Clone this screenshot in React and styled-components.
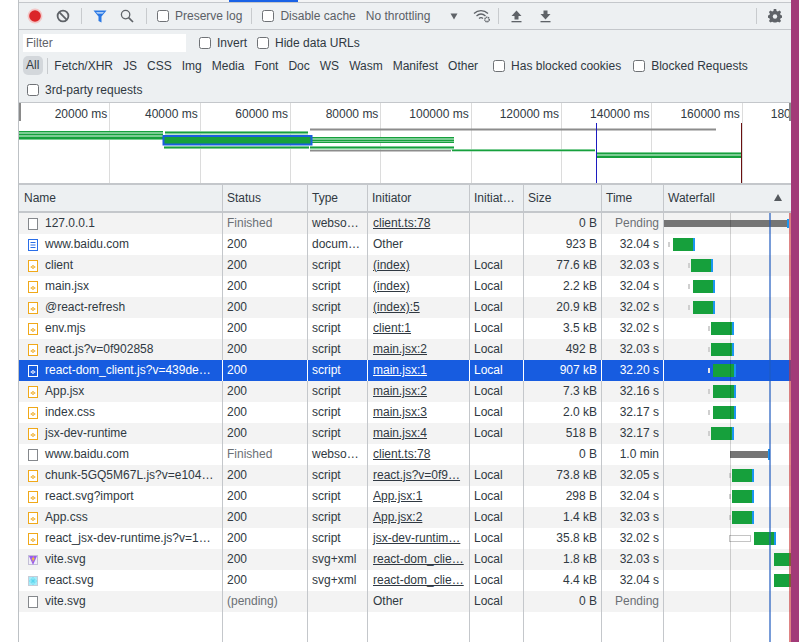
import React from "react";
import styled, { createGlobalStyle } from "styled-components";

const GlobalStyle = createGlobalStyle`
  html, body { margin: 0; padding: 0; background: #fff; }
  body { font-family: "Liberation Sans", Arial, sans-serif; font-size: 12px; color: #303942; }
`;

const Page = styled.div`
  display: flex;
  height: 642px;
  width: 799px;
  overflow: hidden;
`;

const Panel = styled.div`
  margin-left: 18px;
  width: 772px;
  flex: none;
  border-left: 1px solid #bdc1c5;
  display: flex;
  flex-direction: column;
  background: #fff;
`;

const Strip = styled.div`
  flex: 1;
  background: #a23a78;
`;

const TabEdge = styled.div`
  height: 2px;
  border-bottom: 1px solid #c4c7cb;
  background: #f3f4f5;
  padding-left: 210px;
`;

const TabMark = styled.div`
  width: 69px;
  height: 2px;
  background: #1a62e6;
`;

const Toolbar = styled.div`
  height: 26px;
  display: flex;
  align-items: center;
  background: #edf0f2;
  border-bottom: 1px solid #c4c7cb;
  color: #5b6066;
`;

const ToolIcon = styled.svg`
  flex: none;
  display: block;
  margin-left: ${(p) => p.$left}px;
`;

const Sep = styled.div`
  flex: none;
  width: 1px;
  height: 16px;
  background: #c8cbce;
  margin-left: ${(p) => p.$left}px;
`;

const Check = styled.input.attrs({ type: "checkbox" })`
  appearance: none;
  flex: none;
  box-sizing: border-box;
  width: 12px;
  height: 12px;
  margin: 0 6px 0 ${(p) => p.$left || 0}px;
  background: #fff;
  border: 1px solid #6f7276;
  border-radius: 2.5px;
`;

const ToolText = styled.span`
  flex: none;
  margin-left: ${(p) => p.$left || 0}px;
`;

const FilterBar = styled.div`
  background: #edf0f2;
  border-bottom: 1px solid #c4c7cb;
  padding: 3px 0 0 4px;
  height: 69px;
`;

const FilterRow = styled.div`
  display: flex;
  align-items: center;
  height: ${(p) => p.$h}px;
`;

const FilterInput = styled.div`
  width: 160px;
  height: 18px;
  line-height: 19px;
  padding-left: 3px;
  background: #fff;
  color: #5f6368;
  flex: none;
`;

const TypeAll = styled.span`
  flex: none;
  height: 19px;
  line-height: 19px;
  padding: 0 4px 0 3px;
  border-radius: 5px;
  background: #d3d7db;
`;

const TypeSep = styled.div`
  flex: none;
  width: 1px;
  height: 16px;
  background: #c8cbce;
  margin: 0 6px 0 4px;
`;

const TypeName = styled.span`
  flex: none;
  margin-right: 10px;
`;

const Overview = styled.div`
  position: relative;
  height: 80px;
  overflow: hidden;
  border-bottom: 2px solid #c4c7cb;
`;

const Ticks = styled.div`
  display: flex;
  height: 100%;
  margin-left: 1px;
`;

const Tick = styled.div`
  flex: none;
  box-sizing: border-box;
  width: 90.35px;
  padding: 4px 2px 0 0;
  text-align: right;
  white-space: nowrap;
  border-right: 1px solid #dcdcdc;
`;

const LastTick = styled.div`
  flex: none;
  padding: 4px 0 0 28px;
  white-space: nowrap;
`;

const Handle = styled.div`
  position: absolute;
  top: 0;
  ${(p) => (p.$right ? "right: 0;" : "left: 0;")}
  width: 2px;
  height: 18px;
  background: #8a8a8a;
`;

const OverviewChart = styled.svg`
  position: absolute;
  left: 0;
  top: 0;
`;

const Table = styled.div`
  flex: 1;
  display: flex;
  flex-direction: column;
  position: relative;
  min-height: 0;
`;

const columns = "203px 85px 60px 102px 54px 78px 62px 128px";

const HeadRow = styled.div`
  display: grid;
  grid-template-columns: ${columns};
  height: 26px;
  background: #edf0f2;
  border-bottom: 2px solid #c4c7cb;
`;

const HeadCell = styled.div`
  box-sizing: border-box;
  display: flex;
  align-items: center;
  justify-content: ${(p) => (p.$between ? "space-between" : "flex-start")};
  padding: 0 ${(p) => (p.$between ? 9 : 4)}px 1px ${(p) => (p.$first ? 5 : 4)}px;
  border-left: ${(p) => (p.$first ? "none" : "1px solid #c4c7cb")};
`;

const SortArrow = styled.span`
  width: 0;
  height: 0;
  border-left: 4px solid transparent;
  border-right: 4px solid transparent;
  border-bottom: 7px solid #55595e;
`;

const Row = styled.div`
  display: grid;
  grid-template-columns: ${columns};
  height: 21px;
  background: ${(p) => (p.$selected ? "#175ce0" : p.$odd ? "#f3f3f3" : "#fff")};
  color: ${(p) => (p.$selected ? "#fff" : "#303942")};
`;

const Cell = styled.div`
  box-sizing: border-box;
  line-height: 21px;
  padding: 0 4px 0 ${(p) => p.$pad || 4}px;
  white-space: nowrap;
  overflow: hidden;
  border-left: 1px solid ${(p) => (p.$selected ? "#fff" : "#c4c7cb")};
  text-align: ${(p) => (p.$right ? "right" : "left")};
  color: ${(p) => (p.$muted ? "#6b7075" : "inherit")};
  text-decoration: ${(p) => (p.$link ? "underline" : "none")};
`;

const NameCell = styled.div`
  display: flex;
  align-items: center;
  line-height: 21px;
  padding-left: 9px;
  gap: 7px;
  white-space: nowrap;
  overflow: hidden;
`;

const WaterCell = styled.div`
  position: relative;
  overflow: hidden;
  border-left: 1px solid ${(p) => (p.$selected ? "#fff" : "#c4c7cb")};
`;

const Bar = styled.div`
  position: absolute;
  box-sizing: border-box;
  left: ${(p) => p.$x - 664}px;
  width: ${(p) => p.$w}px;
  top: ${(p) => p.$top}px;
  height: ${(p) => p.$h}px;
  background: ${(p) => p.$color};
  border: ${(p) => p.$border || "none"};
`;

const Filler = styled.div`
  flex: 1;
  display: grid;
  grid-template-columns: ${columns};
`;

const FillCol = styled.div`
  border-left: ${(p) => (p.$first ? "none" : "1px solid #c4c7cb")};
`;

const MarkLine = styled.div`
  position: absolute;
  top: 28px;
  bottom: 0;
  left: ${(p) => p.$x - 19}px;
  width: ${(p) => p.$w}px;
  background: ${(p) => p.$color};
`;

const GREEN = "#16a03c";
const BLUE = "#1a96f0";

function FileIcon({ kind, selected }) {
  const orange = selected ? "#fff" : "#f0a818";
  if (kind === "vite") {
    return (
      <svg width="10" height="12" viewBox="0 0 10 12">
        <rect x="0.5" y="1.5" width="9" height="9" fill="#f0eef8" stroke="#c3bfd6" />
        <path d="M1 2 L9 2 L5 11 Z" fill="#9a5cf0" />
        <path d="M6 1.5 L3.4 5.6 L4.9 5.6 L4.4 8.6 L6.8 4.2 L5.3 4.2 Z" fill="#f9c928" />
      </svg>
    );
  }
  if (kind === "react") {
    return (
      <svg width="10" height="12" viewBox="0 0 10 12">
        <rect x="0.5" y="1.5" width="9" height="9" fill="#a5ecfa" stroke="#c6cdd8" />
        <circle cx="5" cy="6" r="1" fill="#45cfea" />
        <ellipse cx="5" cy="6" rx="3.6" ry="1.5" fill="none" stroke="#5fd8ef" strokeWidth="0.6" />
        <ellipse cx="5" cy="6" rx="1.5" ry="3.6" fill="none" stroke="#5fd8ef" strokeWidth="0.6" />
      </svg>
    );
  }
  if (kind === "doc") {
    return (
      <svg width="10" height="12" viewBox="0 0 10 12">
        <rect x="0.5" y="0.5" width="9" height="11" fill="#fff" stroke="#2a6ee8" />
        <path d="M2.5 3.5H7.5M2.5 6H7.5M2.5 8.5H7.5" stroke="#2a6ee8" />
      </svg>
    );
  }
  if (kind === "script") {
    return (
      <svg width="10" height="12" viewBox="0 0 10 12">
        <rect x="0.5" y="0.5" width="9" height="11" fill={selected ? "#175ce0" : "#fff"} stroke={orange} />
        <circle cx="5" cy="7" r="1.3" fill="none" stroke={orange} />
        <path d="M2.5 7H3.7M6.3 7H7.5" stroke={orange} strokeWidth="0.8" />
      </svg>
    );
  }
  return (
    <svg width="10" height="12" viewBox="0 0 10 12">
      <rect x="0.5" y="0.5" width="9" height="11" fill="#fff" stroke="#85888c" />
    </svg>
  );
}

const wait = (x, top = 8) => ({ x, w: 2, top, h: 5, color: "#cfcfcf" });
const green = (x, w = 20) => ({ x, w, top: 4, h: 13, color: GREEN });
const recv = (x) => ({ x, w: 2, top: 4, h: 13, color: BLUE });

const mid = (wx, x) => [wait(wx), green(x, 21), recv(x + 21)];
const late = [wait(729), green(732), recv(752)];

const rows = [
  { n: "127.0.0.1", k: "blank", st: "Finished", m: 1, ty: "webso…", ini: "client.ts:78", l: 1, by: "", size: "0 B", time: "Pending", tm: 1,
    bars: [{ x: 664, w: 123, top: 7, h: 7, color: "#757575" }, { x: 787, w: 2, top: 6, h: 9, color: BLUE }] },
  { n: "www.baidu.com", k: "doc", st: "200", ty: "docum…", ini: "Other", by: "", size: "923 B", time: "32.04 s", bars: [wait(668), green(673), recv(693)] },
  { n: "client", k: "script", st: "200", ty: "script", ini: "(index)", l: 1, by: "Local", size: "77.6 kB", time: "32.03 s", bars: [wait(688), green(691), recv(711)] },
  { n: "main.jsx", k: "script", st: "200", ty: "script", ini: "(index)", l: 1, by: "Local", size: "2.2 kB", time: "32.04 s", bars: [wait(688), green(693), recv(713)] },
  { n: "@react-refresh", k: "script", st: "200", ty: "script", ini: "(index):5", l: 1, by: "Local", size: "20.9 kB", time: "32.02 s", bars: [wait(688), green(693), recv(713)] },
  { n: "env.mjs", k: "script", st: "200", ty: "script", ini: "client:1", l: 1, by: "Local", size: "3.5 kB", time: "32.02 s", bars: mid(708, 711) },
  { n: "react.js?v=0f902858", k: "script", st: "200", ty: "script", ini: "main.jsx:2", l: 1, by: "Local", size: "492 B", time: "32.03 s", bars: mid(708, 711) },
  { n: "react-dom_client.js?v=439de…", k: "script", st: "200", ty: "script", ini: "main.jsx:1", l: 1, by: "Local", size: "907 kB", time: "32.20 s", sel: 1, bars: [{ ...wait(708), color: "#e6e6e6" }, green(713, 21), recv(734)] },
  { n: "App.jsx", k: "script", st: "200", ty: "script", ini: "main.jsx:2", l: 1, by: "Local", size: "7.3 kB", time: "32.16 s", bars: mid(708, 713) },
  { n: "index.css", k: "script", st: "200", ty: "script", ini: "main.jsx:3", l: 1, by: "Local", size: "2.0 kB", time: "32.17 s", bars: mid(708, 713) },
  { n: "jsx-dev-runtime", k: "script", st: "200", ty: "script", ini: "main.jsx:4", l: 1, by: "Local", size: "518 B", time: "32.17 s", bars: mid(708, 711) },
  { n: "www.baidu.com", k: "blank", st: "Finished", m: 1, ty: "webso…", ini: "client.ts:78", l: 1, by: "", size: "0 B", time: "1.0 min",
    bars: [{ x: 730, w: 38, top: 7, h: 7, color: "#757575" }, { x: 768, w: 2, top: 5, h: 11, color: BLUE }] },
  { n: "chunk-5GQ5M67L.js?v=e104…", k: "script", st: "200", ty: "script", ini: "react.js?v=0f9…", l: 1, by: "Local", size: "73.8 kB", time: "32.05 s", bars: late },
  { n: "react.svg?import", k: "script", st: "200", ty: "script", ini: "App.jsx:1", l: 1, by: "Local", size: "298 B", time: "32.04 s", bars: late },
  { n: "App.css", k: "script", st: "200", ty: "script", ini: "App.jsx:2", l: 1, by: "Local", size: "1.4 kB", time: "32.03 s", bars: late },
  { n: "react_jsx-dev-runtime.js?v=1…", k: "script", st: "200", ty: "script", ini: "jsx-dev-runtim…", l: 1, by: "Local", size: "35.8 kB", time: "32.02 s",
    bars: [{ x: 729, w: 22, top: 7, h: 7, color: "#fff", border: "1px solid #c4c4c4" }, green(754), recv(774)] },
  { n: "vite.svg", k: "vite", st: "200", ty: "svg+xml", ini: "react-dom_clie…", l: 1, by: "Local", size: "1.8 kB", time: "32.03 s", bars: [green(774, 20)] },
  { n: "react.svg", k: "react", st: "200", ty: "svg+xml", ini: "react-dom_clie…", l: 1, by: "Local", size: "4.4 kB", time: "32.04 s", bars: [green(774, 20)] },
  { n: "vite.svg", k: "blank", st: "(pending)", m: 1, ty: "", ini: "Other", by: "Local", size: "0 B", time: "Pending", tm: 1, bars: [] },
];

const tickLabels = ["20000 ms", "40000 ms", "60000 ms", "80000 ms", "100000 ms", "120000 ms", "140000 ms", "160000 ms"];
const typeNames = ["Fetch/XHR", "JS", "CSS", "Img", "Media", "Font", "Doc", "WS", "Wasm", "Manifest", "Other"];

// one overview band: pale base with darker lines on it
function Band({ x1, x2, y, h, lines }) {
  return (
    <g>
      <rect x={x1 - 19} y={y - 103} width={x2 - x1} height={h} fill="#7ccc94" />
      {lines.map((l) => (
        <rect key={l} x={x1 - 19} y={y - 103 + l} width={x2 - x1} height="1" fill={GREEN} />
      ))}
    </g>
  );
}

function OverviewBars() {
  return (
    <OverviewChart width="772" height="80" viewBox="0 0 772 80">
      <rect x={310 - 19} y={128.5 - 103} width="406" height="2" fill="#8c8c8c" />
      <Band x1={19} x2={163} y={131} h={9} lines={[0, 3, 6, 7]} />
      <Band x1={165} x2={308} y={131} h={3.5} lines={[1]} />
      <Band x1={164} x2={309} y={146} h={3} lines={[1]} />
      <Band x1={312} x2={454} y={137} h={6} lines={[0, 3, 5]} />
      <Band x1={310} x2={454} y={146} h={3.5} lines={[1]} />
      <rect x={310 - 19} y={150 - 103} width="141" height="1.5" fill="#8c8c8c" />
      <Band x1={452} x2={595} y={149} h={2.5} lines={[1]} />
      <Band x1={597} x2={741} y={152} h={6} lines={[1, 4, 5]} />
      <rect x={163.5 - 19} y={136 - 103} width="148" height="8.5" fill={GREEN} stroke="#1a5fe0" strokeWidth="2" />
      <rect x={596 - 19} y={123 - 103} width="1" height="60" fill="#1c1cc0" />
      <rect x={741 - 19} y={123 - 103} width="1" height="60" fill="#6a1010" />
    </OverviewChart>
  );
}

function Toolbar1() {
  return (
    <Toolbar>
      <ToolIcon $left={8} width="16" height="16" viewBox="0 0 16 16">
        <circle cx="8" cy="8" r="7.5" fill="#f3c6c6" />
        <circle cx="8" cy="8" r="5.8" fill="#db2528" />
      </ToolIcon>
      <ToolIcon $left={13} width="14" height="14" viewBox="0 0 14 14">
        <circle cx="7" cy="7" r="5.4" fill="none" stroke="#5f6368" strokeWidth="1.8" />
        <path d="M3.2 3.2L10.8 10.8" stroke="#5f6368" strokeWidth="1.8" />
      </ToolIcon>
      <Sep $left={11} />
      <ToolIcon $left={11} width="14" height="13" viewBox="0 0 14 13">
        <path d="M0.5 0.5H13.5L8.5 6.5V12.5L5.5 11V6.5Z" fill="#2a78e4" />
        <path d="M3 2H11L9.5 3.8H4.5Z" fill="#a9cbf7" />
      </ToolIcon>
      <ToolIcon $left={13} width="14" height="14" viewBox="0 0 14 14">
        <circle cx="5.6" cy="5.6" r="4.2" fill="none" stroke="#5f6368" strokeWidth="1.3" />
        <path d="M8.6 8.6L13 13" stroke="#5f6368" strokeWidth="1.7" />
      </ToolIcon>
      <Sep $left={12} />
      <Check $left={10} />
      <ToolText>Preserve log</ToolText>
      <Sep $left={9} />
      <Check $left={10} />
      <ToolText>Disable cache</ToolText>
      <ToolText $left={10}>No throttling</ToolText>
      <ToolIcon $left={20} width="8" height="7" viewBox="0 0 8 7">
        <path d="M0.5 0.5H7.5L4 6.5Z" fill="#5f6368" />
      </ToolIcon>
      <ToolIcon $left={15} width="18" height="14" viewBox="0 0 18 14">
        <path d="M1 4.5C5 0.6 11 0.6 15 4.5M3.5 7C6.2 4.6 9.8 4.6 12.5 7M6 9.4C7.2 8.4 8.8 8.4 10 9.4" fill="none" stroke="#5f6368" strokeWidth="1.3" />
        <circle cx="14" cy="10.5" r="2.2" fill="none" stroke="#5f6368" strokeWidth="1.5" strokeDasharray="1.2 0.5" />
      </ToolIcon>
      <Sep $left={7} />
      <ToolIcon $left={12} width="11" height="13" viewBox="0 0 11 13">
        <path d="M5.5 0.5L10.5 6H7.5V9.5H3.5V6H0.5Z" fill="#5f6368" />
        <rect x="0.5" y="11" width="10" height="1.3" fill="#5f6368" />
      </ToolIcon>
      <ToolIcon $left={18} width="11" height="13" viewBox="0 0 11 13">
        <path d="M3.5 0.5H7.5V4H10.5L5.5 9.5L0.5 4H3.5Z" fill="#5f6368" />
        <rect x="0.5" y="11" width="10" height="1.3" fill="#5f6368" />
      </ToolIcon>
      <Sep $left={205} />
      <ToolIcon $left={11} width="14" height="14" viewBox="0 0 14 14">
        <path d="M5.8 0.5H8.2L8.6 2.4L9.9 2.9L11.5 1.9L13.1 3.5L12.1 5.1L12.6 6.4L14 6.8V9.2L12.6 9.6L12.1 10.9L13.1 12.5L11.5 14L9.9 13.1L8.6 13.6L8.2 14H5.8L5.4 13.6L4.1 13.1L2.5 14L0.9 12.5L1.9 10.9L1.4 9.6L0 9.2V6.8L1.4 6.4L1.9 5.1L0.9 3.5L2.5 1.9L4.1 2.9L5.4 2.4Z" fill="#5f6368" transform="translate(0 -0.4)" />
        <circle cx="7" cy="7.5" r="2.2" fill="#edf0f2" />
      </ToolIcon>
    </Toolbar>
  );
}

function Filters() {
  return (
    <FilterBar>
      <FilterRow $h={19}>
        <FilterInput>Filter</FilterInput>
        <Check $left={13} />
        <ToolText>Invert</ToolText>
        <Check $left={10} />
        <ToolText>Hide data URLs</ToolText>
      </FilterRow>
      <FilterRow $h={27}>
        <TypeAll>All</TypeAll>
        <TypeSep />
        {typeNames.map((t) => (
          <TypeName key={t}>{t}</TypeName>
        ))}
        <Check $left={5} />
        <ToolText>Has blocked cookies</ToolText>
        <Check $left={12} />
        <ToolText>Blocked Requests</ToolText>
      </FilterRow>
      <FilterRow $h={21}>
        <Check $left={4} />
        <ToolText>3rd-party requests</ToolText>
      </FilterRow>
    </FilterBar>
  );
}

export default function App() {
  return (
    <Page>
      <GlobalStyle />
      <Panel>
        <TabEdge>
          <TabMark />
        </TabEdge>
        <Toolbar1 />
        <Filters />
        <Overview>
          <Ticks>
            {tickLabels.map((t) => (
              <Tick key={t}>{t}</Tick>
            ))}
            <LastTick>180</LastTick>
          </Ticks>
          <OverviewBars />
          <Handle />
          <Handle $right />
        </Overview>
        <Table>
          <HeadRow>
            <HeadCell $first>Name</HeadCell>
            <HeadCell>Status</HeadCell>
            <HeadCell>Type</HeadCell>
            <HeadCell>Initiator</HeadCell>
            <HeadCell>Initiat…</HeadCell>
            <HeadCell>Size</HeadCell>
            <HeadCell>Time</HeadCell>
            <HeadCell $between>
              Waterfall
              <SortArrow />
            </HeadCell>
          </HeadRow>
          {rows.map((r, i) => (
            <Row key={i} $odd={i % 2 === 0} $selected={r.sel}>
              <NameCell>
                <FileIcon kind={r.k} selected={r.sel} />
                {r.n}
              </NameCell>
              <Cell $selected={r.sel} $muted={r.m}>{r.st}</Cell>
              <Cell $selected={r.sel}>{r.ty}</Cell>
              <Cell $selected={r.sel} $link={r.l} $pad={5}>{r.ini}</Cell>
              <Cell $selected={r.sel}>{r.by}</Cell>
              <Cell $selected={r.sel} $right>{r.size}</Cell>
              <Cell $selected={r.sel} $right $muted={r.tm}>{r.time}</Cell>
              <WaterCell $selected={r.sel}>
                {r.bars.map((b, j) => (
                  <Bar key={j} $x={b.x} $w={b.w} $top={b.top} $h={b.h} $color={b.color} $border={b.border} />
                ))}
              </WaterCell>
            </Row>
          ))}
          <Filler>
            <FillCol $first />
            <FillCol />
            <FillCol />
            <FillCol />
            <FillCol />
            <FillCol />
            <FillCol />
            <FillCol />
          </Filler>
          <MarkLine $x={730} $w={1} $color="rgba(0,0,0,0.17)" />
          <MarkLine $x={769} $w={2} $color="rgba(30,90,190,0.6)" />
          <MarkLine $x={789} $w={2} $color="rgba(200,50,50,0.6)" />
        </Table>
      </Panel>
      <Strip />
    </Page>
  );
}
